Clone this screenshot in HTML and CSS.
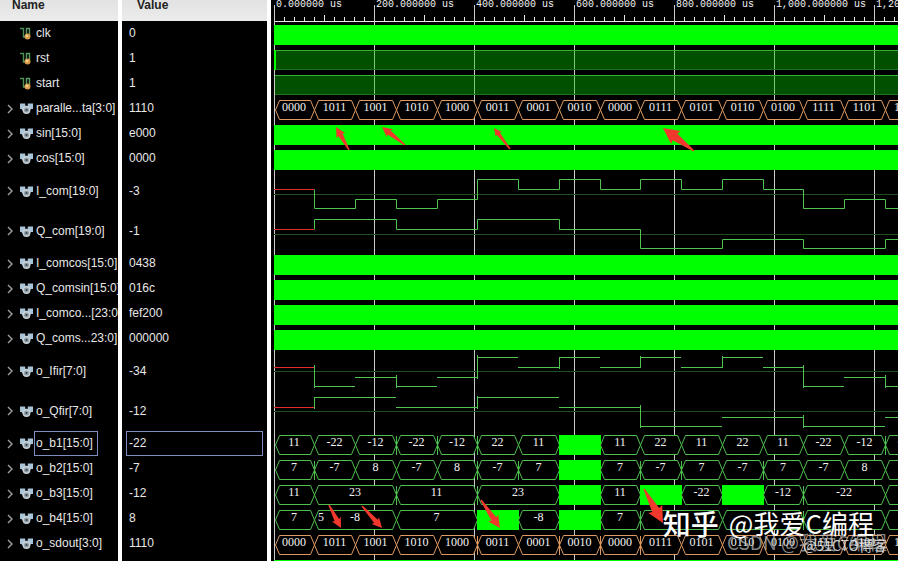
FILE: index.html
```html
<!DOCTYPE html>
<html lang="en">
<head>
<meta charset="utf-8">
<title>Waveform</title>
<link rel="stylesheet" href="styles.css">
</head>
<body>
<svg class="defs" aria-hidden="true">
  <symbol id="icon-chevron" viewBox="0 0 6 10"><path d="M1 1l4 4-4 4" fill="none" stroke="#a0a0a0" stroke-width="1.4"/></symbol>
  <symbol id="icon-bus" viewBox="0 0 13 12">
    <path d="M0 1h5.200v2.200h2.600V1H13v5.500H11L9.500 8h-7L1.500 6.500H0z" fill="#a9c4d6"/>
    <circle cx="6.500" cy="7.500" r="3.200" fill="#8e9ca6" stroke="#c9d2d8" stroke-width="1.400"/>
    <circle cx="6.500" cy="7.500" r="1" fill="#3a444c"/>
  </symbol>
  <symbol id="icon-wire" viewBox="0 0 13 13">
    <path d="M0 1.500h3.500V10H6" fill="none" stroke="#4a8f56" stroke-width="1.400"/>
    <path d="M6.500 8V1.500h3V8" fill="none" stroke="#5a9a66" stroke-width="1.400"/>
    <circle cx="7.500" cy="9.500" r="3" fill="#d79a4a"/>
    <circle cx="7" cy="9" r="1.300" fill="#f0cf95"/>
  </symbol>
</svg>
<main class="viewer">
  <section class="pane names">
    <h2 class="head">Name</h2>
    <ul class="list" id="names"></ul>
  </section>
  <section class="pane values">
    <h2 class="head">Value</h2>
    <ul class="list" id="values"></ul>
  </section>
  <section class="waves">
    <svg class="grid" id="grid"></svg>
    <svg class="ruler" id="ruler"></svg>
    <div class="lanes" id="lanes"></div>
    <svg class="arrows" id="arrows"></svg>
    <div class="mark mark-back">CSDN @我爱C编程</div>
    <div class="mark mark-small">@51CTO博客</div>
    <div class="mark mark-main"><b class="brand">知乎</b><span>@我爱C编程</span></div>
  </section>
</main>
<script src="app.js"></script>
</body>
</html>
```
FILE: styles.css
```css
* { box-sizing: border-box; }
body {
  margin: 0;
  background: #000;
  color: #e8e8e8;
  font: 12px/16px "Liberation Sans", sans-serif;
}
.defs { position: absolute; width: 0; height: 0; }
.viewer {
  display: grid;
  grid-template-columns: 122px 149px minmax(0, 1fr);
  height: 100vh;
  overflow: hidden;
}
.pane {
  border-right: 4px solid #fff;
  overflow: hidden;
}
.head {
  height: 21px;
  margin: 0;
  padding-left: 12px;
  background: linear-gradient(#e2e2e2, #ececec);
  color: #222;
  font-size: 12px;
  font-weight: bold;
  line-height: 10px;
}
.values .head { padding-left: 15px; }
.list { margin: 0; padding: 0; list-style: none; }
.row {
  display: flex;
  align-items: center;
  height: 25px;
  white-space: nowrap;
}
.row.tall { height: 40px; }
.names .row { padding-left: 7px; }
.toggle {
  display: flex;
  flex: none;
  width: 13px;
  margin: 0;
  padding: 0;
  border: 0;
  background: none;
}
.chevron { width: 6px; height: 10px; }
.icon { flex: none; width: 13px; height: 13px; }
.label {
  height: 25px;
  margin-left: 1px;
  padding: 0 4px 0 1px;
  border: 1px solid transparent;
  line-height: 22px;
}
.values .label { flex: 1; margin: 0 4px; padding: 0 2px; }
.selected .label { border-color: #7d8dc0; }

.waves {
  position: relative;
  padding-left: 3px;
  overflow: hidden;
}
.waves svg { display: block; width: 100%; }
.ruler { height: 21px; }
.ruler, .lanes { position: relative; }
.waves .grid, .waves .arrows {
  position: absolute;
  top: 0;
  left: 3px;
  height: 100%;
}
.lane { height: 25px; }
.lane.tall { height: 40px; }
.waves text {
  fill: #f2f2f2;
  font: 12px "Liberation Serif", serif;
}
.waves .ruler text { font: 10px "Liberation Mono", monospace; }
.lane text { text-anchor: middle; }
.gridline { stroke: #c8ccc8; }
.tick { stroke: #e8e8e8; }
.solid { fill: #00ff00; }
.level { fill: rgba(0, 200, 0, 0.4); }
.edge { stroke: #35b035; fill: none; }
.edge.dim { stroke: #1c701c; }
.zero { stroke: #1d501d; }
.trace { fill: none; stroke: #4fc44f; }
.unknown { fill: none; stroke: #e82c2c; }
.bus { fill: #000; stroke: #4fbf4f; }
.bus.amber { stroke: #dd9a62; }
.arrow { fill: #f0382c; }

.mark {
  position: absolute;
  right: 11px;
  font-family: "Noto Sans CJK SC", sans-serif;
  white-space: nowrap;
}
.mark-back { bottom: 5px; font-size: 19px; line-height: 28px; color: rgba(190, 190, 190, 0.7); }
.mark-small { bottom: 6px; font-size: 14px; line-height: 20px; color: rgba(235, 235, 235, 0.85); }
.mark-main {
  right: 24px;
  bottom: 19px;
  display: flex;
  gap: 10px;
  color: #fff;
  font-size: 26px;
  line-height: 38px;
}
.brand { font-size: 28px; font-weight: 500; }
```
FILE: app.js
```js
// Time positions (px from the time axis) where the symbols change.
const T = [0, 40, 81, 122, 163, 203, 244, 285, 326, 366, 407, 448, 489, 529, 570, 611, 652];
const END = 4000;
const codes = ['0000', '1011', '1001', '1010', '1000', '0011', '0001', '0010', '0000', '0111', '0101', '0110', '0100', '1111', '1101', '1110'];
const each = list => list.map((v, i) => [i, i + 1, v]);
const S = 'solid';

const signals = [
  { name: 'clk', value: '0', kind: 'solid', wire: true },
  { name: 'rst', value: '1', kind: 'level', wire: true, rise: true },
  { name: 'start', value: '1', kind: 'level', wire: true },
  { name: 'paralle...ta[3:0]', value: '1110', kind: 'bus', amber: true, segs: each(codes) },
  { name: 'sin[15:0]', value: 'e000', kind: 'solid' },
  { name: 'cos[15:0]', value: '0000', kind: 'solid' },
  { name: 'I_com[19:0]', value: '-3', kind: 'analog', zero: 23, joined: true,
    segs: [[0, 1, 18], [1, 2, 37], [2, 3, 28], [3, 4, 37], [4, 5, 28], [5, 6, 8], [6, 7, 18], [7, 8, 8], [8, 9, 18], [9, 10, 8], [10, 11, 18], [11, 12, 8], [12, 13, 18], [13, 14, 37], [14, 15, 28], [15, 16, 37]] },
  { name: 'Q_com[19:0]', value: '-1', kind: 'analog', zero: 23, joined: true,
    segs: [[0, 1, 18], [1, 3, 8], [3, 5, 18], [5, 7, 8], [7, 9, 18], [9, 11, 37], [11, 13, 28], [13, 15, 37], [15, 16, 28]] },
  { name: 'I_comcos[15:0]', value: '0438', kind: 'solid' },
  { name: 'Q_comsin[15:0]', value: '016c', kind: 'solid' },
  { name: 'I_comco...[23:0]', value: 'fef200', kind: 'solid' },
  { name: 'Q_coms...23:0]', value: '000000', kind: 'solid' },
  { name: 'o_Ifir[7:0]', value: '-34', kind: 'analog', zero: 20,
    segs: [[0, 1, 16], [1, 2, 35], [2, 3, 26], [3, 4, 35], [4, 5, 26], [5, 6, 6], [6, 7, 16], [7, 8, 6], [8, 9, 16], [9, 10, 6], [10, 11, 16], [11, 12, 6], [12, 13, 16], [13, 14, 35], [14, 15, 26], [15, 16, 35]],
    steps: [[1, 14, 37], [3, 24, 37], [5, 4, 28], [7, 6, 18], [9, 5, 17], [11, 5, 17], [13, 14, 37], [15, 24, 37]] },
  { name: 'o_Qfir[7:0]', value: '-12', kind: 'analog', zero: 20,
    segs: [[0, 1, 16], [1, 3, 6], [3, 5, 16], [5, 7, 6], [7, 9, 16], [9, 11, 35], [11, 13, 26], [13, 15, 35], [15, 16, 26]],
    steps: [[1, 6, 18], [5, 5, 18], [9, 14, 37], [13, 24, 37]] },
  { name: 'o_b1[15:0]', value: '-22', kind: 'bus', selected: true, marks: [3, 4, 5, 15],
    segs: each(['11', '-22', '-12', '-22', '-12', '22', '11', S, '11', '22', '11', '22', '11', '-22', '-12', '-22']) },
  { name: 'o_b2[15:0]', value: '-7', kind: 'bus', marks: [1, 5, 6, 9, 10, 12],
    segs: each(['7', '-7', '8', '-7', '8', '-7', '7', S, '7', '-7', '7', '-7', '7', '-7', '8', '']) },
  { name: 'o_b3[15:0]', value: '-12', kind: 'bus', marks: [3, 5, 13],
    segs: [[0, 1, '11'], [1, 3, '23'], [3, 5, '11'], [5, 7, '23'], [7, 8, S], [8, 9, '11'], [9, 10, S], [10, 11, '-22'], [11, 12, S], [12, 13, '-12'], [13, 15, '-22'], [15, 16, '']] },
  { name: 'o_b4[15:0]', value: '8', kind: 'bus', marks: [9, 13],
    segs: [[0, 1, '7'], [1, 3, '-8'], [3, 5, '7'], [5, 6, S], [6, 7, '-8'], [7, 8, S], [8, 9, '7'], [9, 11, ''], [11, 13, ''], [13, 15, ''], [15, 16, '']],
    notes: [[47, '5']] },
  { name: 'o_sdout[3:0]', value: '1110', kind: 'bus', amber: true, marks: [5, 7, 8, 9], segs: each(codes) },
  { name: '', value: '', kind: 'solid', blank: true }
];

const path = (cls, d) => `<path class="${cls}" d="${d}"/>`;
const text = (x, y, s) => `<text x="${x}" y="${y}">${s}</text>`;

function drawAnalog(s) {
  let out = path('zero', `M0 ${s.zero + .5}H${END}`);
  let d = '', start = '';
  s.segs.forEach(([a, b, y], i) => {
    if (i === 0) { start = path('unknown', `M0 ${y + .5}H${T[b]}`); d = `M${T[b] + .5} ${y + .5}`; return; }
    d += s.joined ? `V${y + .5}H${T[b] + .5}` : `M${T[a]} ${y + .5}H${T[b]}`;
  });
  (s.steps || []).forEach(([i, y1, y2]) => { d += `M${T[i] + .5} ${y1}V${y2}`; });
  return out + path('trace', d) + start;
}

function drawBus(s) {
  const cls = s.amber ? 'bus amber' : 'bus';
  let out = '';
  s.segs.forEach(([a, b, v]) => {
    const l = (T[a] || 1) + .5, r = T[b] + .5;
    if (v === S) { out += `<rect class="solid" x="${T[a]}" y="4" width="${T[b] - T[a] + 1}" height="20"/>`; return; }
    out += path(cls, `M${l} 14L${l + 4} 4.500H${r - 4}L${r} 14L${r - 4} 23.500H${l + 4}Z`);
    if (v) out += text((T[a] + T[b]) / 2, 15, v);
  });
  (s.marks || []).forEach(i => { out += path(cls, `M${T[i] + .5} 5V24`); });
  (s.notes || []).forEach(([x, v]) => { out += text(x, 15, v); });
  return out;
}

function draw(s) {
  if (s.kind === 'solid') return '<rect class="solid" x="0" y="4" width="100%" height="20"/>';
  if (s.kind === 'level') {
    return '<rect class="level" x="1" y="4" width="100%" height="20"/>' +
      path('edge', `M1 4.500H${END}`) + path('edge dim', `M1 23.500H${END}`) +
      (s.rise ? '<rect class="solid" x="0" y="4" width="2" height="20"/>' : '');
  }
  return s.kind === 'analog' ? drawAnalog(s) : drawBus(s);
}

let names = '', values = '', lanes = '';
signals.forEach(s => {
  const size = s.kind === 'analog' ? ' tall' : '';
  const sel = s.selected ? ' selected' : '';
  if (!s.blank) {
    const toggle = s.wire ? '<span class="toggle"></span>'
      : `<button class="toggle" aria-label="${s.name}"><svg class="chevron"><use href="#icon-chevron"/></svg></button>`;
    names += `<li class="row${size}${sel}">${toggle}<svg class="icon"><use href="#icon-${s.wire ? 'wire' : 'bus'}"/></svg><span class="label">${s.name}</span></li>`;
    values += `<li class="row${size}${sel}"><span class="label">${s.value}</span></li>`;
  }
  lanes += `<svg class="lane${size}">${draw(s)}</svg>`;
});
document.getElementById('names').innerHTML = names;
document.getElementById('values').innerHTML = values;
document.getElementById('lanes').innerHTML = lanes;

// One major line per 200 us (100 px), a tick every 20 us.
let grid = path('tick', `M0 21.500H${END}`), ruler = '';
for (let i = 0; i < END / 10; i++) {
  const x = i * 10 + .5;
  if (i % 10 === 0) {
    grid += path('gridline', `M${x} 5V${END}`);
    ruler += text(x + 1.5, 7, (i * 20).toLocaleString('en-US') + '.000000 us');
  } else {
    grid += path('tick', `M${x} ${i % 5 ? 17 : 15}V21`);
  }
}
document.getElementById('grid').innerHTML = grid;
document.getElementById('ruler').innerHTML = ruler;

// Each arrow: tip x, tip y, tail x, tail y, head half-width.
const arrows = [
  [62, 127, 75, 150, 5], [108, 127, 131, 145, 5], [220, 128, 236, 149, 4], [389, 128, 420, 151, 8],
  [67, 528, 55, 505, 5], [108, 528, 88, 506, 5], [226, 528, 207, 500, 6], [389, 523, 370, 489, 8]
];
document.getElementById('arrows').innerHTML = arrows.map(([x, y, tx, ty, w]) => {
  const len = Math.hypot(tx - x, ty - y), ux = (tx - x) / len, uy = (ty - y) / len;
  const at = (along, side) => `${(x + ux * along - uy * side).toFixed(1)} ${(y + uy * along + ux * side).toFixed(1)}`;
  const h = w * 2;
  return path('arrow', `M${at(0, 0)}L${at(h, w)}L${at(h - 1, w * .5)}L${at(len, .7)}L${at(len, -.7)}L${at(h - 1, -w * .5)}L${at(h, -w)}Z`);
}).join('');
```
